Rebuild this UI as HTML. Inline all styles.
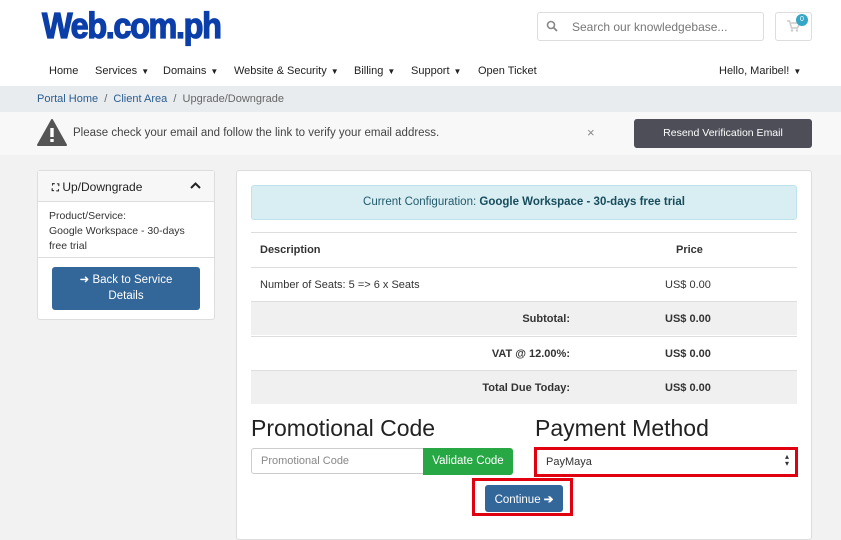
<!DOCTYPE html>
<html><head><meta charset="utf-8"><style>
*{box-sizing:border-box;margin:0;padding:0}
body{width:841px;height:530px;overflow:hidden;font-family:"Liberation Sans",sans-serif;font-size:12px;color:#333;background:#f2f2f2;position:relative}
.abs{position:absolute}
.hdr{left:0;top:0;width:841px;height:86px;background:#fff}
.logo{left:42px;top:5px;font-family:"Liberation Sans",sans-serif;font-weight:bold;font-size:36px;color:#0b3ea8;letter-spacing:-1.5px;transform:scaleX(0.9);transform-origin:left;-webkit-text-stroke:1.3px #0b3ea8}
.search{left:537px;top:12px;width:227px;height:29px;border:1px solid #ddd;border-radius:3px;background:#fff;color:#777;font-size:12px;padding:7px 0 0 34px}
.cart{left:775px;top:12px;width:37px;height:29px;border:1px solid #ddd;border-radius:3px}
.badge{left:796px;top:14px;width:12px;height:12px;border-radius:50%;background:#36a6c6;color:#fff;font-size:7px;text-align:center;line-height:12px}
.nav{top:65px;font-size:11px;color:#222}
.car{font-size:8px;margin-left:4px}
.bc{left:0;top:86px;width:841px;height:26px;background:#e9ecef;font-size:11px;color:#666;padding:7px 0 0 37px}
.bc a{color:#2a5d8f}
.alert{left:0;top:112px;width:841px;height:43px;background:#f8f8f8}
.card{background:#fff;border:1px solid #ddd;border-radius:3px}
.btn{color:#fff;text-align:center;border-radius:3px}
.row{position:absolute;left:251px;width:546px;height:34px;border-top:1px solid #ddd;font-size:11px}
.row span{position:absolute;top:11px}
</style></head><body>
<div class="abs hdr"></div>
<div class="abs logo">Web.com.ph</div>
<div class="abs search">Search our knowledgebase...</div>
<svg class="abs" style="left:546px;top:20px" width="12" height="12"><circle cx="5" cy="5" r="3.5" fill="none" stroke="#888" stroke-width="1.6"/><line x1="7.5" y1="7.5" x2="11" y2="11" stroke="#888" stroke-width="1.8"/></svg>
<div class="abs cart"></div>
<svg class="abs" style="left:787px;top:20px" width="13" height="12"><path d="M0 1h2.5l2 7h6l2-5H4" fill="none" stroke="#ccc" stroke-width="1.5"/><circle cx="5" cy="10.5" r="1.2" fill="#ccc"/><circle cx="10" cy="10.5" r="1.2" fill="#ccc"/></svg>
<div class="abs badge">0</div>
<div class="abs nav" style="left:49px">Home</div>
<div class="abs nav" style="left:95px">Services<span class="car">▼</span></div>
<div class="abs nav" style="left:163px">Domains<span class="car">▼</span></div>
<div class="abs nav" style="left:234px">Website &amp; Security<span class="car">▼</span></div>
<div class="abs nav" style="left:354px">Billing<span class="car">▼</span></div>
<div class="abs nav" style="left:411px">Support<span class="car">▼</span></div>
<div class="abs nav" style="left:478px">Open Ticket</div>
<div class="abs nav" style="left:719px">Hello, Maribel!<span class="car">▼</span></div>
<div class="abs bc"><a>Portal Home</a> &nbsp;/&nbsp; <a>Client Area</a> &nbsp;/&nbsp; Upgrade/Downgrade</div>
<div class="abs alert"></div>
<svg class="abs" style="left:37px;top:119px" width="30" height="27"><path d="M15 1L29 26H1Z" fill="#555" stroke="#555" stroke-linejoin="round" stroke-width="2"/><rect x="13.3" y="9" width="3.4" height="9" fill="#fff"/><rect x="13.3" y="20" width="3.4" height="3" fill="#fff"/></svg>
<div class="abs" style="left:73px;top:127px;font-size:11.5px;color:#444">Please check your email and follow the link to verify your email address.</div>
<div class="abs" style="left:587px;top:125px;font-size:13px;color:#888">×</div>
<div class="abs btn" style="left:634px;top:119px;width:178px;height:29px;background:#4d4e58;font-size:10.5px;padding-top:8px">Resend Verification Email</div>

<div class="abs card" style="left:37px;top:170px;width:178px;height:150px"></div>
<div class="abs" style="left:38px;top:171px;width:176px;height:31px;background:#f7f7f7;border-bottom:1px solid #ddd"></div>
<div class="abs" style="left:52px;top:180px;font-size:12px;color:#222"><span style="font-size:10px;font-weight:bold">⛶</span> Up/Downgrade</div>
<svg class="abs" style="left:190px;top:182px" width="11" height="8"><path d="M1 6l4.5-4.5L10 6" fill="none" stroke="#222" stroke-width="2"/></svg>
<div class="abs" style="left:49px;top:209px;font-size:10.5px;line-height:15px;color:#333">Product/Service:<br>Google Workspace - 30-days<br>free trial</div>
<div class="abs" style="left:38px;top:257px;width:176px;border-top:1px solid #ddd"></div>
<div class="abs btn" style="left:52px;top:267px;width:148px;height:43px;background:#336699;font-size:11.5px;line-height:16px;padding-top:5px">➜ Back to Service<br>Details</div>

<div class="abs card" style="left:236px;top:170px;width:576px;height:370px"></div>
<div class="abs" style="left:251px;top:185px;width:546px;height:35px;background:#d9eef3;border:1px solid #bfe3ec;border-radius:3px;font-size:11.5px;color:#225a6b;text-align:center;padding-top:10px">Current Configuration: <b style="color:#174c5c">Google Workspace - 30-days free trial</b></div>
<div class="row" style="top:232px;height:35px;font-weight:bold"><span style="left:9px">Description</span><span style="left:425px">Price</span></div>
<div class="row" style="top:267px"><span style="left:9px">Number of Seats: 5 =&gt; 6 x Seats</span><span style="left:414px">US$ 0.00</span></div>
<div class="row" style="top:301px;background:#f0f0f0;font-weight:bold"><span style="right:227px">Subtotal:</span><span style="left:414px">US$ 0.00</span></div>
<div class="row" style="top:336px;font-weight:bold"><span style="right:227px">VAT @ 12.00%:</span><span style="left:414px">US$ 0.00</span></div>
<div class="row" style="top:370px;background:#f0f0f0;font-weight:bold"><span style="right:227px">Total Due Today:</span><span style="left:414px">US$ 0.00</span></div>
<div class="abs" style="left:251px;top:415px;font-size:23px;color:#222">Promotional Code</div>
<div class="abs" style="left:535px;top:415px;font-size:23px;color:#222">Payment Method</div>
<div class="abs" style="left:251px;top:448px;width:173px;height:26px;border:1px solid #ccc;border-radius:3px 0 0 3px;font-size:11px;color:#888;padding:6px 0 0 9px">Promotional Code</div>
<div class="abs btn" style="left:423px;top:448px;width:90px;height:27px;background:#28a745;font-size:11.5px;padding-top:7px;border-radius:0 3px 3px 0">Validate Code</div>
<div class="abs" style="left:534px;top:447px;width:264px;height:30px;border:3px solid #e0000f"></div>
<div class="abs" style="left:537px;top:450px;width:258px;height:24px;background:#fff;font-size:11px;padding:6px 0 0 9px;color:#333">PayMaya<span style="position:absolute;right:6px;top:3px;font-size:8px;line-height:7px">▴<br>▾</span></div>
<div class="abs" style="left:472px;top:478px;width:101px;height:38px;border:3px solid #e0000f"></div>
<div class="abs btn" style="left:485px;top:485px;width:78px;height:27px;background:#336699;font-size:11.5px;padding-top:7px">Continue <b>➔</b></div>
</body></html>
